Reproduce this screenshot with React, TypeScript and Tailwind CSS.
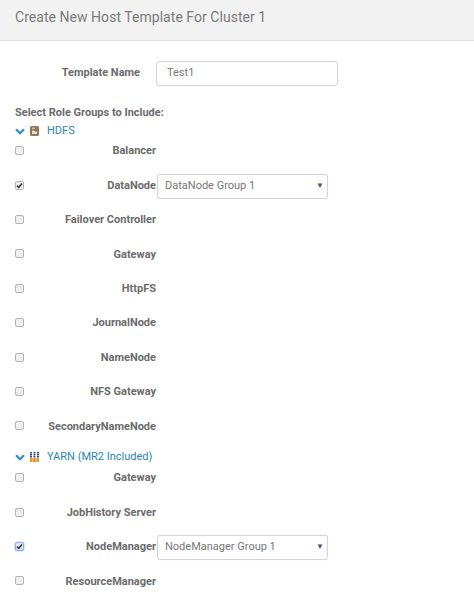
const HDFS_ROLES = [
  { name: "Balancer" },
  { name: "DataNode", group: "DataNode Group 1" },
  { name: "Failover Controller" },
  { name: "Gateway" },
  { name: "HttpFS" },
  { name: "JournalNode" },
  { name: "NameNode" },
  { name: "NFS Gateway" },
  { name: "SecondaryNameNode" },
];

const YARN_ROLES = [
  { name: "Gateway" },
  { name: "JobHistory Server" },
  { name: "NodeManager", group: "NodeManager Group 1", focused: true },
  { name: "ResourceManager" },
];

type Role = { name: string; group?: string; focused?: boolean };

function Chevron() {
  return (
    <svg width="10" height="7" viewBox="0 0 10 7" className="shrink-0">
      <path d="M1 1.2 L5 5.2 L9 1.2" fill="none" stroke="#2b8fc4" strokeWidth="2.2" />
    </svg>
  );
}

function HdfsIcon() {
  return (
    <svg width="9" height="10" viewBox="0 0 9 10" className="shrink-0">
      <rect x="0" y="0" width="9" height="10" rx="1.5" fill="#8f7757" />
      <path d="M2 4.5 H4 L5 5.5 H7 V8 H2 Z" fill="#e4dccf" />
      <rect x="2" y="1.5" width="3" height="1.5" fill="#c9bba4" />
    </svg>
  );
}

function YarnIcon() {
  const columns = [0, 3.5, 7];
  const rows = [0, 2, 4];
  return (
    <svg width="9" height="10" viewBox="0 0 9 10" className="shrink-0">
      {rows.map((y) =>
        columns.map((x) => (
          <rect key={`${x}-${y}`} x={x} y={y} width="2" height="1.5" fill="#2d4f96" />
        )),
      )}
      <rect x="0" y="6" width="9" height="4" fill="#e8963a" />
      <rect x="2.5" y="6" width="0.7" height="4" fill="#f6cf9f" />
      <rect x="5.8" y="6" width="0.7" height="4" fill="#f6cf9f" />
    </svg>
  );
}

function RoleRow({ role }: { role: Role }) {
  const checked = !!role.group;
  return (
    <div className="flex h-[34.4px] items-center">
      <div
        className={`mb-[2px] flex h-[9px] w-[9px] shrink-0 items-center justify-center rounded-[2px] border ${
          role.focused
            ? "border-[#8db4e0] bg-[#dfe8f3] shadow-[0_0_2px_#7aa7dc]"
            : "border-[#b4b4b4] bg-[#efefef]"
        }`}
      >
        {checked && (
          <svg width="7" height="7" viewBox="0 0 8 8">
            <path d="M1.2 4.2 L3.2 6.2 L6.8 1.6" fill="none" stroke="#333" strokeWidth="1.8" />
          </svg>
        )}
      </div>
      <div className="w-[132px] shrink-0 text-right text-[11px] font-bold text-[#6b6b6b]">
        {role.name}
      </div>
      {role.group && (
        <div className="ml-[1px] flex h-[25px] w-[171px] items-center justify-between rounded-[3px] border border-[#d4d4d4] bg-white pr-[3px] pl-[7px] text-[11px] text-[#777] shadow-[0_0_1px_#ddd]">
          <span>{role.group}</span>
          <span className="text-[8px] text-[#555]">▼</span>
        </div>
      )}
    </div>
  );
}

function ServiceHeading({ label, icon }: { label: string; icon: React.ReactNode }) {
  return (
    <div className="flex items-center text-[11px] text-[#2d84b5]">
      <Chevron />
      <span className="ml-[5px] flex">{icon}</span>
      <span className="ml-[8px]">{label}</span>
    </div>
  );
}

export default function App() {
  return (
    <div className="h-[604px] w-[474px] overflow-hidden bg-white font-['Roboto',sans-serif]">
      <div className="flex h-[41px] items-start border-b border-[#dcdcdc] bg-[#f3f2f3] px-[15px] pt-[7px] text-[14px] tracking-[0.04px] text-[#7a7a7a]">
        Create New Host Template For Cluster 1
      </div>

      <div className="px-[15px]">
        <div className="mt-[20px] flex items-center">
          <div className="w-[125px] shrink-0 text-right text-[11px] font-bold text-[#6b6b6b]">
            Template Name
          </div>
          <div className="ml-[16px] flex h-[25px] w-[182px] items-center rounded-[3px] border border-[#d4d4d4] bg-white px-[10px] text-[11px] text-[#777]">
            Test1
          </div>
        </div>

        <div className="mt-[20px] text-[11px] leading-[14px] font-bold text-[#6b6b6b]">
          Select Role Groups to Include:
        </div>

        <div className="mt-[3px]">
          <ServiceHeading label="HDFS" icon={<HdfsIcon />} />
        </div>
        <div className="mt-[-5px]">
          {HDFS_ROLES.map((role) => (
            <RoleRow key={role.name} role={role} />
          ))}
        </div>

        <div className="mt-[5px]">
          <ServiceHeading label="YARN (MR2 Included)" icon={<YarnIcon />} />
        </div>
        <div className="mt-[-4px]">
          {YARN_ROLES.map((role) => (
            <RoleRow key={role.name} role={role} />
          ))}
        </div>
      </div>
    </div>
  );
}
